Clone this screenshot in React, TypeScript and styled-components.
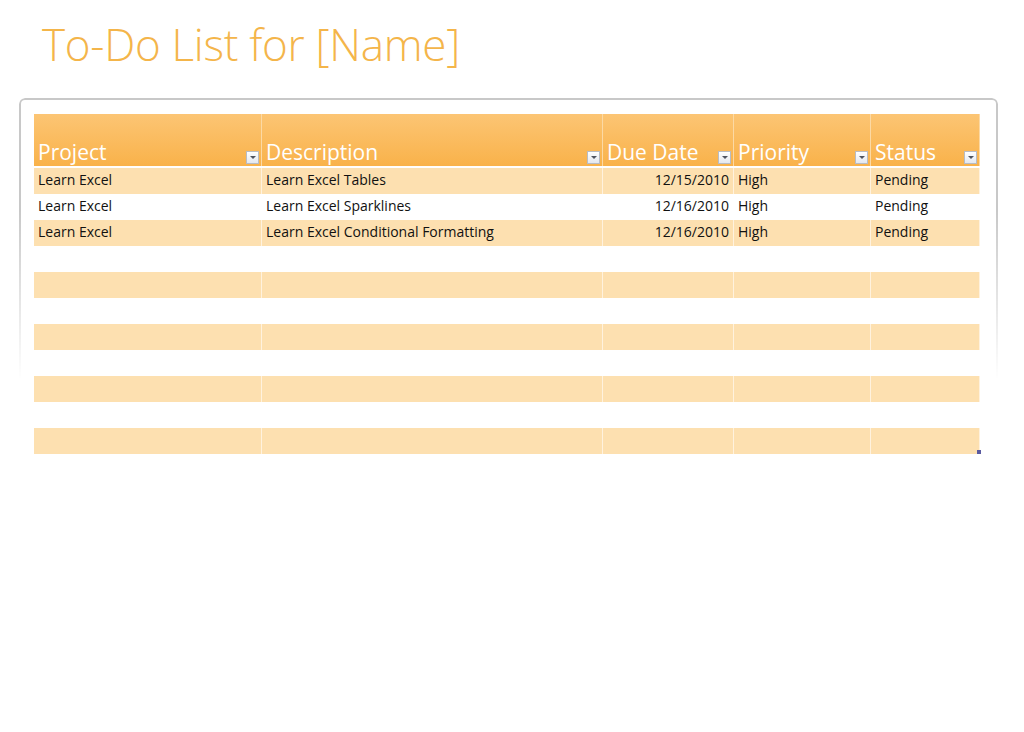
import styled, { createGlobalStyle } from "styled-components";

const Global = createGlobalStyle`
  body { margin: 0; background: #fff; font-family: "Open Sans", "Noto Sans", sans-serif; }
`;

const Page = styled.div`
  width: 1024px;
  height: 732px;
  overflow: hidden;
  padding-top: 14px;
  box-sizing: border-box;
`;

const Title = styled.h1`
  margin: 0 0 0 42px;
  font-weight: 300;
  font-size: 44px;
  line-height: 60px;
  color: #f4b54a;
  letter-spacing: -0.3px;
`;

const Panel = styled.div`
  position: relative;
  margin: 24px 26px 0 19px;
  padding: 16px 17px 0 15px;
  &::before {
    content: "";
    position: absolute;
    inset: 0 0 auto 0;
    height: 280px;
    border: 2px solid #c8c8c8;
    border-bottom: none;
    border-radius: 6px 6px 0 0;
    -webkit-mask-image: linear-gradient(#000 40%, transparent);
    mask-image: linear-gradient(#000 40%, transparent);
    pointer-events: none;
  }
`;

const Grid = styled.div`
  position: relative;
  display: grid;
  grid-template-columns: 228px 341px 131px 137px 109px;
`;

const Head = styled.div`
  height: 52px;
  margin-bottom: 2px;
  background: linear-gradient(#fcc574, #f9b24a);
  border-right: 1px solid #fcd9a4;
  display: flex;
  align-items: flex-end;
  justify-content: space-between;
  color: #fff;
  font-size: 21px;
  line-height: 28px;
  padding: 0 2px 0 4px;
  box-sizing: border-box;
  &:last-of-type { border-right: none; }
`;

const Drop = styled.span`
  width: 13px;
  height: 13px;
  margin-bottom: 2px;
  background: linear-gradient(#fff, #e4e8ef);
  border: 1px solid #b8bcc4;
  box-sizing: border-box;
  display: flex;
  align-items: center;
  justify-content: center;
  &::after {
    content: "";
    border-left: 3px solid transparent;
    border-right: 3px solid transparent;
    border-top: 3px solid #505560;
  }
`;

const Cell = styled.div<{ $band: boolean; $right?: boolean }>`
  height: 26px;
  line-height: 24px;
  background: ${(p) => (p.$band ? "#fde0b0" : "#fff")};
  border-right: 1px solid ${(p) => (p.$band ? "#fff2de" : "#fff")};
  font-size: 14px;
  color: #111;
  padding: 0 4px;
  text-align: ${(p) => (p.$right ? "right" : "left")};
  box-sizing: border-box;
  white-space: nowrap;
`;

const Corner = styled.span`
  position: absolute;
  right: 0;
  bottom: 0;
  width: 4px;
  height: 4px;
  background: #5a5aa0;
`;

const heads = ["Project", "Description", "Due Date", "Priority", "Status"];
const data = [
  ["Learn Excel", "Learn Excel Tables", "12/15/2010", "High", "Pending"],
  ["Learn Excel", "Learn Excel Sparklines", "12/16/2010", "High", "Pending"],
  ["Learn Excel", "Learn Excel Conditional Formatting", "12/16/2010", "High", "Pending"],
];
const rows = [...data, ...Array.from({ length: 8 }, () => ["", "", "", "", ""])];

export default function App() {
  return (
    <Page>
      <Global />
      <Title>To-Do List for [Name]</Title>
      <Panel>
        <Grid>
          {heads.map((h) => (
            <Head key={h}>
              {h}
              <Drop />
            </Head>
          ))}
          {rows.map((r, i) =>
            r.map((c, j) => (
              <Cell key={`${i}-${j}`} $band={i % 2 === 0} $right={j === 2}>
                {c}
              </Cell>
            ))
          )}
          <Corner />
        </Grid>
      </Panel>
    </Page>
  );
}
